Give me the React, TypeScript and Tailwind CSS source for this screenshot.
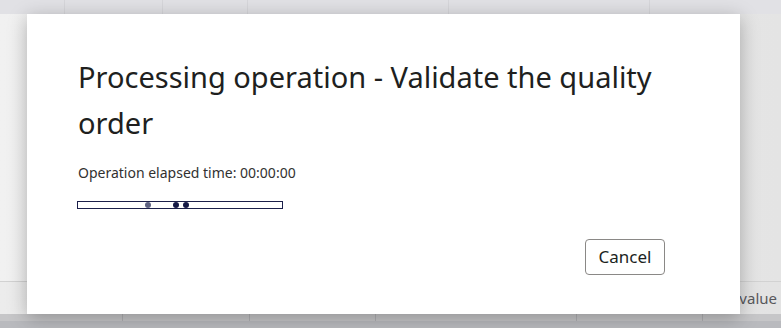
import React from "react";

export default function App() {
  const font = { fontFamily: '"Noto Sans", "Open Sans", sans-serif' };
  return (
    <div className="relative w-[781px] h-[328px] overflow-hidden bg-[#eeeeef]" style={font}>
      {/* background page */}
      <div className="flex flex-col h-full">
        <div className="h-[14px] bg-[#e1e1e5] relative flex">
          <div className="w-[65px] border-r border-[#d6d6da]" />
          <div className="w-[98px] border-r border-[#d6d6da]" />
          <div className="w-[85px] border-r border-[#d6d6da]" />
          <div className="w-[201px] border-r border-[#d6d6da]" />
          <div className="w-[201px] border-r border-[#d6d6da]" />
        </div>
        <div className="h-[267px] bg-gradient-to-r from-[#f1f1f1] to-[#e4e4e4]" />
        <div className="h-[33px] border-t border-[#d2d2d2] bg-gradient-to-r from-[#ececec] to-[#e3e3e3] flex justify-end items-center pr-[4px]">
          <span className="text-[15px] text-[#58585c]">value</span>
        </div>
        <div className="flex-1 flex flex-col">
          <div className="h-[7px] bg-[#c6c6c8] flex">
            <div className="w-[123px] border-r border-[#b0b0b3]" />
            <div className="w-[127px] border-r border-[#b0b0b3]" />
            <div className="w-[126px] border-r border-[#b0b0b3]" />
            <div className="w-[201px] border-r border-[#b0b0b3]" />
            <div className="w-[126px] border-r border-[#b0b0b3]" />
          </div>
          <div className="flex-1 bg-[#b9babe]" />
        </div>
      </div>

      {/* dialog */}
      <div className="absolute left-[27px] top-[14px] w-[713px] h-[300px] bg-white shadow-[0_4px_18px_rgba(0,0,0,0.28)] flex flex-col pl-[51px] pr-[60px] pt-[40px]">
        <h1 className="text-[29px] leading-[46px] text-[#201f1e] font-normal">
          Processing operation - Validate the quality order
        </h1>
        <p className="mt-[18px] text-[14px] leading-[18px] text-[#323130]">
          Operation elapsed time: 00:00:00
        </p>
        <div className="mt-[19px] -ml-[1px] relative w-[206px] h-[8px] border border-[#1b1f4a]">
          <span className="absolute left-[67px] top-[0px] w-[6px] h-[6px] rounded-full bg-[#5e6282]" />
          <span className="absolute left-[95px] top-[0px] w-[6px] h-[6px] rounded-full bg-[#141845]" />
          <span className="absolute left-[105px] top-[0px] w-[6px] h-[6px] rounded-full bg-[#141845]" />
        </div>
        <div className="flex justify-end mt-auto mb-[39px] mr-[15px]">
          <button className="w-[80px] h-[36px] rounded-[4px] border border-[#8a8886] text-[17px] text-[#201f1e] bg-white">
            Cancel
          </button>
        </div>
      </div>
    </div>
  );
}
